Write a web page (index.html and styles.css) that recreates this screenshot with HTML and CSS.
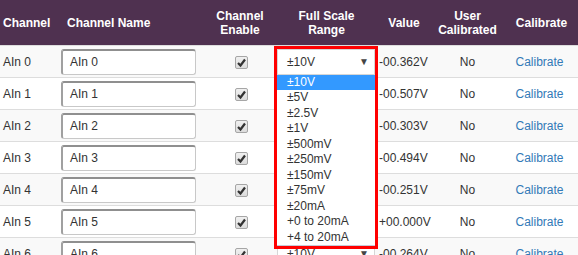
FILE: index.html
```html
<!DOCTYPE html>
<html>
<head>
<meta charset="utf-8">
<link rel="stylesheet" href="styles.css">
</head>
<body>
<table class="grid">
  <colgroup>
    <col class="c-ch"><col class="c-name"><col class="c-en"><col class="c-fsr"><col class="c-val"><col class="c-user"><col class="c-cal">
  </colgroup>
  <thead>
    <tr>
      <th class="t-left">Channel</th>
      <th class="t-name">Channel Name</th>
      <th>Channel<br>Enable</th>
      <th>Full Scale<br>Range</th>
      <th>Value</th>
      <th>User<br>Calibrated</th>
      <th>Calibrate</th>
    </tr>
  </thead>
  <tbody>
    <tr>
      <td class="ch">AIn 0</td>
      <td class="nm"><div class="input">AIn 0</div></td>
      <td class="en"><span class="cb"><svg viewBox="0 0 13 13" width="13" height="13"><path d="M3 7 L5.5 9.5 L10 3.5" fill="none" stroke="#333" stroke-width="2.2"/></svg></span></td>
      <td class="fsr">
        <div class="sel-wrap">
          <div class="select"><span>±10V</span><span class="arrow">▼</span></div>
          <ul class="popup">
            <li class="on">±10V</li>
            <li>±5V</li>
            <li>±2.5V</li>
            <li>±1V</li>
            <li>±500mV</li>
            <li>±250mV</li>
            <li>±150mV</li>
            <li>±75mV</li>
            <li>±20mA</li>
            <li>+0 to 20mA</li>
            <li>+4 to 20mA</li>
          </ul>
          <div class="mark"></div>
        </div>
      </td>
      <td class="val">-00.362V</td>
      <td class="uc">No</td>
      <td class="cal"><a href="#">Calibrate</a></td>
    </tr>
    <tr>
      <td class="ch">AIn 1</td>
      <td class="nm"><div class="input">AIn 1</div></td>
      <td class="en"><span class="cb"><svg viewBox="0 0 13 13" width="13" height="13"><path d="M3 7 L5.5 9.5 L10 3.5" fill="none" stroke="#333" stroke-width="2.2"/></svg></span></td>
      <td class="fsr"><div class="select"><span>±10V</span><span class="arrow">▼</span></div></td>
      <td class="val">-00.507V</td>
      <td class="uc">No</td>
      <td class="cal"><a href="#">Calibrate</a></td>
    </tr>
    <tr>
      <td class="ch">AIn 2</td>
      <td class="nm"><div class="input">AIn 2</div></td>
      <td class="en"><span class="cb"><svg viewBox="0 0 13 13" width="13" height="13"><path d="M3 7 L5.5 9.5 L10 3.5" fill="none" stroke="#333" stroke-width="2.2"/></svg></span></td>
      <td class="fsr"><div class="select"><span>±10V</span><span class="arrow">▼</span></div></td>
      <td class="val">-00.303V</td>
      <td class="uc">No</td>
      <td class="cal"><a href="#">Calibrate</a></td>
    </tr>
    <tr>
      <td class="ch">AIn 3</td>
      <td class="nm"><div class="input">AIn 3</div></td>
      <td class="en"><span class="cb"><svg viewBox="0 0 13 13" width="13" height="13"><path d="M3 7 L5.5 9.5 L10 3.5" fill="none" stroke="#333" stroke-width="2.2"/></svg></span></td>
      <td class="fsr"><div class="select"><span>±10V</span><span class="arrow">▼</span></div></td>
      <td class="val">-00.494V</td>
      <td class="uc">No</td>
      <td class="cal"><a href="#">Calibrate</a></td>
    </tr>
    <tr>
      <td class="ch">AIn 4</td>
      <td class="nm"><div class="input">AIn 4</div></td>
      <td class="en"><span class="cb"><svg viewBox="0 0 13 13" width="13" height="13"><path d="M3 7 L5.5 9.5 L10 3.5" fill="none" stroke="#333" stroke-width="2.2"/></svg></span></td>
      <td class="fsr"><div class="select"><span>±10V</span><span class="arrow">▼</span></div></td>
      <td class="val">-00.251V</td>
      <td class="uc">No</td>
      <td class="cal"><a href="#">Calibrate</a></td>
    </tr>
    <tr>
      <td class="ch">AIn 5</td>
      <td class="nm"><div class="input">AIn 5</div></td>
      <td class="en"><span class="cb"><svg viewBox="0 0 13 13" width="13" height="13"><path d="M3 7 L5.5 9.5 L10 3.5" fill="none" stroke="#333" stroke-width="2.2"/></svg></span></td>
      <td class="fsr"><div class="select"><span>±10V</span><span class="arrow">▼</span></div></td>
      <td class="val">+00.000V</td>
      <td class="uc">No</td>
      <td class="cal"><a href="#">Calibrate</a></td>
    </tr>
    <tr>
      <td class="ch">AIn 6</td>
      <td class="nm"><div class="input">AIn 6</div></td>
      <td class="en"><span class="cb"><svg viewBox="0 0 13 13" width="13" height="13"><path d="M3 7 L5.5 9.5 L10 3.5" fill="none" stroke="#333" stroke-width="2.2"/></svg></span></td>
      <td class="fsr"><div class="select"><span>±10V</span><span class="arrow">▼</span></div></td>
      <td class="val">-00.264V</td>
      <td class="uc">No</td>
      <td class="cal"><a href="#">Calibrate</a></td>
    </tr>
  </tbody>
</table>
</body>
</html>
```

FILE: styles.css
```css
html, body {
  margin: 0;
  padding: 0;
  background: #fff;
  font-family: "Liberation Sans", Arial, sans-serif;
  font-size: 12px;
  color: #333;
  overflow: hidden;
}

.grid {
  width: 578px;
  table-layout: fixed;
  border-collapse: collapse;
  border-spacing: 0;
}

.c-ch { width: 58px; }
.c-name { width: 147px; }
.c-en { width: 70px; }
.c-fsr { width: 103px; }
.c-val { width: 52px; }
.c-user { width: 75px; }
.c-cal { width: 73px; }

.grid th {
  background: #4f3150;
  color: #fff;
  font-weight: bold;
  font-size: 12px;
  line-height: 14px;
  height: 45px;
  padding: 0;
  text-align: center;
  vertical-align: middle;
}

.grid th.t-left { text-align: left; padding-left: 3px; }
.grid th.t-name { text-align: left; padding-left: 9px; }

.grid td {
  height: 31px;
  padding: 0;
  border-top: 1px solid #ddd;
  vertical-align: middle;
  white-space: nowrap;
}

.grid tbody tr:nth-child(odd) td { background: #f9f9f9; }

.grid td.ch { padding-left: 3px; }
.grid td.nm { padding-left: 3px; }
.grid td.en { text-align: center; padding-left: 2px; }
.grid td.fsr { padding-left: 2px; }
.grid td.val { padding-left: 1px; }
.grid td.uc { text-align: center; }
.grid td.cal { text-align: center; padding-right: 4px; }

.input {
  box-sizing: border-box;
  width: 135px;
  height: 26px;
  line-height: 22px;
  padding-left: 7px;
  background: #fff;
  border: 1px solid #c8c8c8;
  border-top: 2px solid #8f8f8f;
  border-left: 2px solid #a0a0a0;
  border-radius: 3px;
  color: #333;
}

.cb {
  display: inline-block;
  width: 13px;
  height: 13px;
  box-sizing: border-box;
  border: 1px solid #a6a6a6;
  border-radius: 2px;
  background: linear-gradient(#f0f0f0, #dcdcdc);
  vertical-align: middle;
  position: relative;
}
.cb svg {
  position: absolute;
  left: -1px;
  top: -1px;
}

.select {
  box-sizing: border-box;
  width: 98px;
  height: 26px;
  display: flex;
  align-items: center;
  justify-content: space-between;
  padding: 0 5px 0 9px;
  background: #fff;
  border: 1px solid #d6d6d6;
  color: #333;
}
.arrow {
  font-size: 10px;
  color: #444;
}

.sel-wrap {
  position: relative;
  width: 98px;
}

.popup {
  position: absolute;
  left: 0;
  top: 26px;
  width: 98px;
  margin: 0;
  padding: 0;
  list-style: none;
  background: #fff;
  border-bottom: 1px solid #c6cbd8;
  box-sizing: border-box;
  z-index: 2;
}
.popup li {
  height: 15.5px;
  line-height: 15.5px;
  padding-left: 10px;
  color: #333;
}
.popup li.on {
  background: #3399ff;
  color: #fff;
}

.mark {
  position: absolute;
  left: -3px;
  top: -3px;
  width: 98px;
  height: 197px;
  border: 3px solid #ff0000;
  z-index: 3;
  pointer-events: none;
}

a {
  color: #337ab7;
  text-decoration: none;
}
```
